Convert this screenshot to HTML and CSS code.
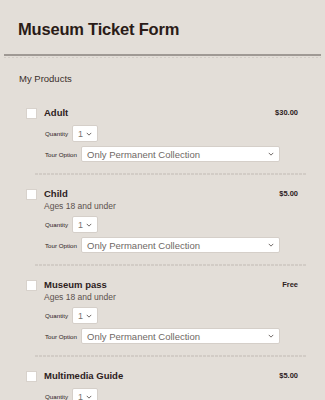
FILE: index.html
```html
<!DOCTYPE html>
<html lang="en">

<head>
    <meta charset="UTF-8">
    <meta name="viewport" content="width=device-width, initial-scale=1.0">
    <title>Museum Ticket Form</title>
    <link rel="stylesheet" href="styles.css">
</head>

<body>
    <div class="header">
        <h1 class="title">Museum Ticket Form</h1>
    </div>
    <div class="header-dots"></div>

    <div class="section">
        <div class="section-label">My Products</div>

        <div class="products">
            <!-- Adult -->
            <div class="product">
                <span class="check"></span>
                <div class="product-body">
                    <div class="product-head">
                        <span class="product-name">Adult</span>
                        <span class="product-price">$30.00</span>
                    </div>
                    <div class="field field-qty">
                        <span class="field-label">Quantity</span>
                        <div class="select select-qty">
                            <span>1</span>
                            <svg class="chev" viewBox="0 0 8 5"><path d="M1 1l3 3 3-3"/></svg>
                        </div>
                    </div>
                    <div class="field">
                        <span class="field-label">Tour Option</span>
                        <div class="select select-tour">
                            <span>Only Permanent Collection</span>
                            <svg class="chev" viewBox="0 0 8 5"><path d="M1 1l3 3 3-3"/></svg>
                        </div>
                    </div>
                </div>
            </div>
            <div class="sep"></div>

            <!-- Child -->
            <div class="product">
                <span class="check"></span>
                <div class="product-body">
                    <div class="product-head">
                        <span class="product-name">Child</span>
                        <span class="product-price">$5.00</span>
                    </div>
                    <div class="product-desc">Ages 18 and under</div>
                    <div class="field field-qty">
                        <span class="field-label">Quantity</span>
                        <div class="select select-qty">
                            <span>1</span>
                            <svg class="chev" viewBox="0 0 8 5"><path d="M1 1l3 3 3-3"/></svg>
                        </div>
                    </div>
                    <div class="field">
                        <span class="field-label">Tour Option</span>
                        <div class="select select-tour">
                            <span>Only Permanent Collection</span>
                            <svg class="chev" viewBox="0 0 8 5"><path d="M1 1l3 3 3-3"/></svg>
                        </div>
                    </div>
                </div>
            </div>
            <div class="sep"></div>

            <!-- Museum pass -->
            <div class="product">
                <span class="check"></span>
                <div class="product-body">
                    <div class="product-head">
                        <span class="product-name">Museum pass</span>
                        <span class="product-price">Free</span>
                    </div>
                    <div class="product-desc">Ages 18 and under</div>
                    <div class="field field-qty">
                        <span class="field-label">Quantity</span>
                        <div class="select select-qty">
                            <span>1</span>
                            <svg class="chev" viewBox="0 0 8 5"><path d="M1 1l3 3 3-3"/></svg>
                        </div>
                    </div>
                    <div class="field">
                        <span class="field-label">Tour Option</span>
                        <div class="select select-tour">
                            <span>Only Permanent Collection</span>
                            <svg class="chev" viewBox="0 0 8 5"><path d="M1 1l3 3 3-3"/></svg>
                        </div>
                    </div>
                </div>
            </div>
            <div class="sep"></div>

            <!-- Multimedia Guide -->
            <div class="product">
                <span class="check"></span>
                <div class="product-body">
                    <div class="product-head">
                        <span class="product-name">Multimedia Guide</span>
                        <span class="product-price">$5.00</span>
                    </div>
                    <div class="field field-qty">
                        <span class="field-label">Quantity</span>
                        <div class="select select-qty">
                            <span>1</span>
                            <svg class="chev" viewBox="0 0 8 5"><path d="M1 1l3 3 3-3"/></svg>
                        </div>
                    </div>
                </div>
            </div>
        </div>
    </div>
</body>

</html>
```

FILE: styles.css
```css
body {
    margin: 0;
    background: #e3ded8;
    font-family: "Liberation Sans", Arial, sans-serif;
    color: #2d211d;
    height: 400px;
    overflow: hidden;
}

.header {
    margin: 0 4px;
    padding: 18px 14px 14px;
    border-bottom: 2px solid #9f9994;
}

.title {
    margin: 0;
    font-size: 16.5px;
    letter-spacing: -0.2px;
    line-height: 22px;
    font-weight: bold;
    color: #2a1b17;
}

.header-dots {
    margin: 1px 4px 0;
    height: 1px;
    background: repeating-linear-gradient(90deg, #d3cdc7 0 2px, transparent 2px 4px);
}

.section {
    padding-top: 14px;
}

.section-label {
    margin-left: 19px;
    font-size: 9.5px;
    line-height: 12px;
    margin-top: 1px;
    color: #3a2f2b;
}

.products {
    margin-top: 9px;
}

.product {
    display: flex;
    margin: 0 27px 0 26px;
    padding: 11px 0 11px;
}

.check {
    flex: none;
    width: 9px;
    height: 9px;
    margin: 3px 7px 0 0;
    background: #fff;
    border: 1px solid #d8d2cc;
}

.product-body {
    flex: 1;
}

.product-head {
    display: flex;
    justify-content: space-between;
    align-items: center;
    height: 14px;
}

.product-name {
    font-size: 9.5px;
    font-weight: bold;
    color: #2d211d;
}

.product-price {
    font-size: 7.5px;
    font-weight: bold;
    color: #2d211d;
}

.product-desc {
    font-size: 8.5px;
    line-height: 12px;
    color: #5b514d;
    margin-bottom: -2px;
}

.field {
    display: flex;
    align-items: center;
    margin-top: 4px;
    padding-left: 1px;
}

.field-qty {
    margin-top: 6px;
}

.field-label {
    font-size: 6.2px;
    color: #2d211d;
    margin-right: 4px;
}

.select {
    display: flex;
    align-items: center;
    justify-content: space-between;
    box-sizing: border-box;
    background: #fff;
    border: 1px solid #d5cfc9;
    border-radius: 2px;
    color: #7a7470;
}

.select-qty {
    width: 26px;
    height: 17px;
    padding: 0 5px 0 5px;
    font-size: 9px;
}

.select-tour {
    width: 199px;
    height: 16px;
    padding: 0 5px 0 5px;
    font-size: 9.5px;
    color: #6f6965;
}

.chev {
    width: 6px;
    height: 4px;
    fill: none;
    stroke: #6d6763;
    stroke-width: 1.3;
}

.sep {
    margin: 0 18px 0 35px;
    height: 2px;
    background: repeating-linear-gradient(90deg, #d2ccc6 0 3px, transparent 3px 4px);
}
```
